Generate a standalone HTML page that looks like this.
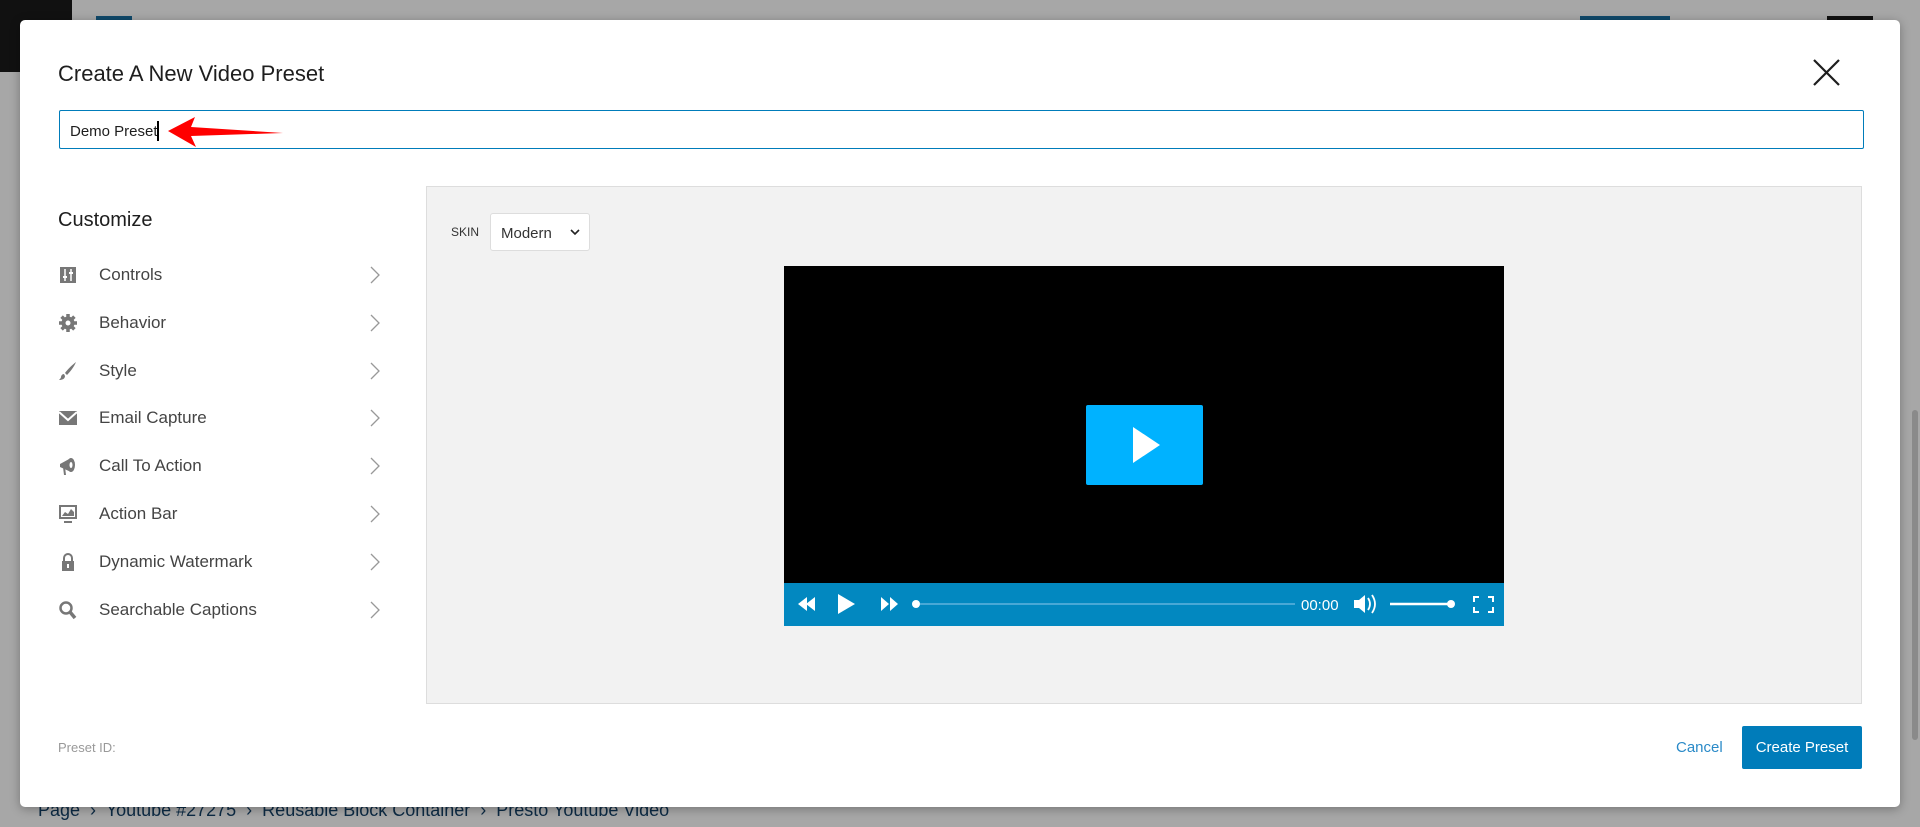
<!DOCTYPE html>
<html><head><meta charset="utf-8"><style>
*{box-sizing:border-box;margin:0;padding:0}
body{width:1920px;height:827px;overflow:hidden;background:#a7a7a7;font-family:"Liberation Sans",sans-serif;position:relative}
.abs{position:absolute}
.modal{left:20px;top:20px;width:1880px;height:787px;background:#fff;border-radius:5px;box-shadow:0 2px 10px rgba(0,0,0,.3)}
.item{position:absolute;left:58px;top:0;height:30px;width:322px;font-size:17px;color:#444;display:flex;align-items:center}
.item svg{width:20px;height:20px;margin-right:21px;fill:#777}
.item .chev{position:absolute;right:0;top:6px;width:10px;height:18px;margin:0}
</style></head><body>
<div class="abs" style="left:0;top:0;width:72px;height:72px;background:#111"></div>
<div class="abs" style="left:96px;top:16px;width:36px;height:6px;background:#10496b"></div>
<div class="abs" style="left:1580px;top:16px;width:90px;height:6px;background:#10496b"></div>
<div class="abs" style="left:1827px;top:16px;width:46px;height:6px;background:#111"></div>
<div class="abs" style="left:1912px;top:410px;width:6px;height:330px;background:#8a8a8a;border-radius:3px"></div>
<div class="abs" style="left:38px;top:800px;font-size:18px;color:#0c2a44;white-space:nowrap">Page &nbsp;›&nbsp; Youtube #27275 &nbsp;›&nbsp; Reusable Block Container &nbsp;›&nbsp; Presto Youtube Video</div>
<div class="abs modal"></div>
<div class="abs" style="left:58px;top:61px;font-size:22px;color:#1e1e1e">Create A New Video Preset</div>
<svg class="abs" style="left:1813px;top:59px" width="27" height="27" viewBox="0 0 27 27"><path d="M1 1L26 26M26 1L1 26" stroke="#1e1e1e" stroke-width="2.2"/></svg>
<div class="abs" style="left:59px;top:110px;width:1805px;height:39px;border:1px solid #007cba;border-radius:2px"></div>
<div class="abs" style="left:70px;top:123px;font-size:15px;color:#1e1e1e">Demo Preset</div>
<div class="abs" style="left:157px;top:121px;width:1.5px;height:20px;background:#000"></div>
<svg class="abs" style="left:165px;top:116px" width="120" height="32" viewBox="0 0 120 32"><path d="M3 15L30 1L26 11L118 17L26 20L31 31Z" fill="#f00"/></svg>
<div class="abs" style="left:58px;top:209px;font-size:20px;color:#1e1e1e">Customize</div>

<div class="item" style="top:260px"><svg viewBox="0 0 20 20"><rect x="2" y="2" width="16" height="16"/><path d="M7 4v12M13 4v12" stroke="#fff" stroke-width="1.5"/><rect x="5" y="11" width="4" height="2" fill="#fff"/><rect x="11" y="7" width="4" height="2" fill="#fff"/></svg>Controls<svg class="chev" viewBox="0 0 10 18"><path d="M1 1L9 9L1 17" stroke="#999" fill="none" stroke-width="1.3"/></svg></div>
<div class="item" style="top:308px"><svg viewBox="0 0 20 20"><circle cx="10" cy="10" r="6.5"/><path d="M10 1v18M1 10h18M3.6 3.6l12.8 12.8M16.4 3.6L3.6 16.4" stroke="#777" stroke-width="3.5"/><circle cx="10" cy="10" r="2.5" fill="#fff"/></svg>Behavior<svg class="chev" viewBox="0 0 10 18"><path d="M1 1L9 9L1 17" stroke="#999" fill="none" stroke-width="1.3"/></svg></div>
<div class="item" style="top:356px"><svg viewBox="0 0 20 20"><path d="M18 1C14 4 9 9 7 12l2 2c3-3 7-8 9-13zM6 13c-2 0-3 2-3 3s-1 2-2 3c3 0 6-1 6-4z"/></svg>Style<svg class="chev" viewBox="0 0 10 18"><path d="M1 1L9 9L1 17" stroke="#999" fill="none" stroke-width="1.3"/></svg></div>
<div class="item" style="top:403px"><svg viewBox="0 0 20 20"><rect x="1" y="3" width="18" height="14"/><path d="M1 4l9 8 9-8" stroke="#fff" stroke-width="2" fill="none"/></svg>Email Capture<svg class="chev" viewBox="0 0 10 18"><path d="M1 1L9 9L1 17" stroke="#999" fill="none" stroke-width="1.3"/></svg></div>
<div class="item" style="top:451px"><svg viewBox="0 0 20 20"><path d="M2 8l11-6v14L2 11z"/><ellipse cx="13" cy="9" rx="4" ry="7"/><ellipse cx="13" cy="9" rx="1.5" ry="3" fill="#fff"/><path d="M5 11l1 8h2l-1-8z"/></svg>Call To Action<svg class="chev" viewBox="0 0 10 18"><path d="M1 1L9 9L1 17" stroke="#999" fill="none" stroke-width="1.3"/></svg></div>
<div class="item" style="top:499px"><svg viewBox="0 0 20 20"><rect x="1" y="1" width="18" height="14"/><rect x="3" y="3" width="14" height="10" fill="#fff"/><path d="M4 12l3-4 3 2 3-5 3 3v4z"/><rect x="6" y="17" width="8" height="2"/></svg>Action Bar<svg class="chev" viewBox="0 0 10 18"><path d="M1 1L9 9L1 17" stroke="#999" fill="none" stroke-width="1.3"/></svg></div>
<div class="item" style="top:547px"><svg viewBox="0 0 20 20"><path d="M6 9V6a4 4 0 0 1 8 0v3" stroke="#777" stroke-width="2" fill="none"/><rect x="4" y="9" width="12" height="10"/><rect x="9" y="12" width="2" height="4" fill="#fff"/></svg>Dynamic Watermark<svg class="chev" viewBox="0 0 10 18"><path d="M1 1L9 9L1 17" stroke="#999" fill="none" stroke-width="1.3"/></svg></div>
<div class="item" style="top:595px"><svg viewBox="0 0 20 20"><circle cx="8" cy="8" r="5.5" stroke="#777" stroke-width="2.5" fill="none"/><path d="M12 12l5 6" stroke="#777" stroke-width="3.5"/></svg>Searchable Captions<svg class="chev" viewBox="0 0 10 18"><path d="M1 1L9 9L1 17" stroke="#999" fill="none" stroke-width="1.3"/></svg></div>

<div class="abs" style="left:426px;top:186px;width:1436px;height:518px;background:#f2f2f2;border:1px solid #ddd"></div>
<div class="abs" style="left:451px;top:225px;font-size:12px;color:#333">SKIN</div>
<div class="abs" style="left:490px;top:213px;width:100px;height:38px;background:#fff;border:1px solid #ddd;border-radius:3px;font-size:15px;color:#333;padding:11px 0 0 10px">Modern<svg class="abs" style="left:79px;top:15px" width="10" height="7" viewBox="0 0 10 7"><path d="M1 1l4 4 4-4" stroke="#222" stroke-width="1.6" fill="none"/></svg></div>
<div class="abs" style="left:784px;top:266px;width:720px;height:360px;background:#000"></div>
<div class="abs" style="left:1086px;top:405px;width:117px;height:80px;background:#00b2ff;border-radius:2px"></div>
<svg class="abs" style="left:1131px;top:427px" width="30" height="36" viewBox="0 0 30 36"><path d="M2 0L29 18L2 36Z" fill="#fff"/></svg>
<div class="abs" style="left:784px;top:583px;width:720px;height:43px;background:#0288c0"></div>
<svg class="abs" style="left:784px;top:583px" width="720" height="43" viewBox="0 0 720 43">
<g fill="#fff">
<path d="M14 21l9-7v14zM22 21l9-7v14z"/>
<path d="M54 11l17 10-17 10z"/>
<path d="M97 14l8 7-8 7zM106 14l8 7-8 7z"/>
<circle cx="132" cy="21" r="4"/>
<path d="M570 17h5l6-5v18l-6-5h-5z"/>
<circle cx="667" cy="21" r="4"/>
</g>
<line x1="136" y1="21" x2="511" y2="21" stroke="#5fb3dd" stroke-width="1.5"/>
<line x1="606" y1="21" x2="665" y2="21" stroke="#fff" stroke-width="2.5"/>
<path d="M584 15q4 6 0 12M588 12q6 9 0 18" stroke="#fff" stroke-width="1.8" fill="none"/>
<path d="M690 19v-5h5M704 14h5v5M709 24v5h-5M695 29h-5v-5" stroke="#fff" stroke-width="2" fill="none"/>
<text x="517" y="27" fill="#fff" font-size="15" font-family="Liberation Sans">00:00</text>
</svg>
<div class="abs" style="left:58px;top:740px;font-size:13px;color:#999">Preset ID:</div>
<div class="abs" style="left:1676px;top:739px;font-size:15px;color:#2a8ac8">Cancel</div>
<div class="abs" style="left:1742px;top:726px;width:120px;height:43px;background:#007cba;border-radius:2px;color:#fff;font-size:15px;text-align:center;line-height:43px">Create Preset</div>
</body></html>
